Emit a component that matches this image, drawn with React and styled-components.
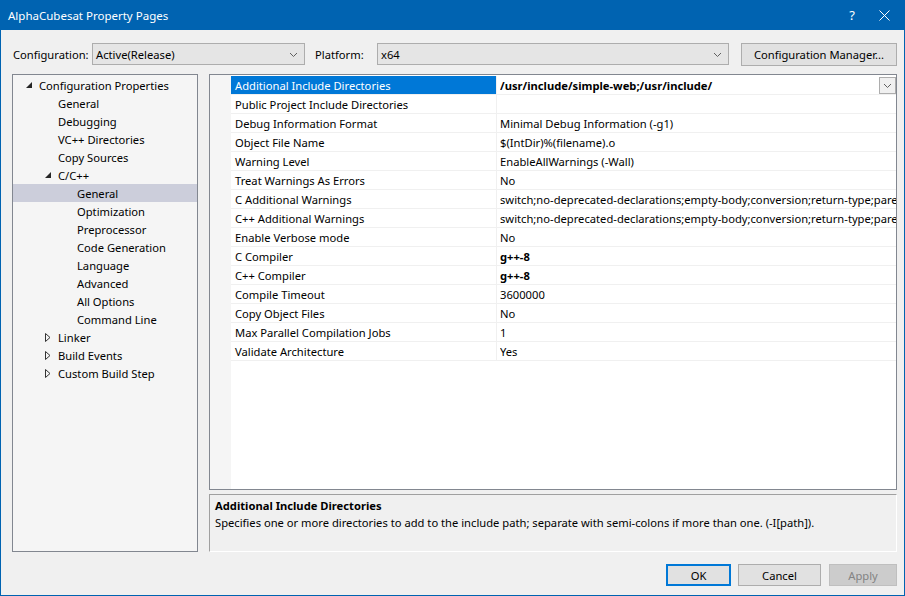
import React from "react";
import styled, { createGlobalStyle } from "styled-components";

const GlobalStyle = createGlobalStyle`
  html, body {
    margin: 0;
    padding: 0;
    background: #f0f0f0;
  }
  * {
    box-sizing: border-box;
  }
`;

const Window = styled.div`
  width: 905px;
  height: 596px;
  display: flex;
  flex-direction: column;
  background: #f0f0f0;
  border: 1px solid #0063b1;
  border-top: none;
  font-family: "Noto Sans", "Segoe UI", sans-serif;
  font-size: 11.2px;
  color: #000;
  overflow: hidden;
`;

const TitleBar = styled.div`
  height: 30px;
  flex: none;
  display: flex;
  align-items: center;
  background: #0063b1;
  color: #fff;
  padding: 0 5px 0 8px;
  margin: 0 -1px;
  font-size: 11.5px;
`;

const Title = styled.div`
  flex: 1;
`;

const TitleButton = styled.div`
  width: 32px;
  height: 30px;
  display: flex;
  align-items: center;
  justify-content: center;
  font-size: 13px;
`;

const Body = styled.div`
  flex: 1;
  display: flex;
  flex-direction: column;
  padding: 13px 7px 0 11px;
`;

const ConfigRow = styled.div`
  height: 22px;
  display: flex;
  align-items: center;
`;

const Label = styled.span`
  width: ${(p) => p.width}px;
  flex: none;
  margin-left: ${(p) => p.left || 0}px;
  white-space: nowrap;
`;

const Select = styled.div`
  height: 22px;
  width: ${(p) => p.width}px;
  flex: none;
  display: flex;
  align-items: center;
  background: #e5e5e5;
  border: 1px solid #adadad;
  padding-left: 3px;
`;

const SelectText = styled.span`
  flex: 1;
`;

const Chevron = ({ gap = 6 }) => (
  <svg width="9" height="9" viewBox="0 0 9 9" style={{ marginRight: gap }}>
    <path d="M1 3 L4.5 6.5 L8 3" fill="none" stroke="#606060" strokeWidth="1" />
  </svg>
);

const Button = styled.button`
  height: ${(p) => p.h || 22}px;
  width: ${(p) => p.width}px;
  flex: none;
  margin-left: ${(p) => p.left || 0}px;
  font-family: inherit;
  font-size: 11.2px;
  color: ${(p) => (p.disabled ? "#838383" : "#000")};
  background: ${(p) => (p.disabled ? "#cccccc" : "#e1e1e1")};
  border: ${(p) =>
    p.primary ? "2px solid #0078d7" : p.disabled ? "1px solid #bfbfbf" : "1px solid #adadad"};
  padding: 0;
`;

const Main = styled.div`
  height: 478px;
  margin-top: 9px;
  display: flex;
  gap: 11px;
`;

const Tree = styled.div`
  width: 186px;
  flex: none;
  background: #f5f5f5;
  border: 1px solid #828790;
  padding-top: 1px;
`;

const TreeRow = styled.div`
  height: 18px;
  display: flex;
  align-items: center;
  padding-left: ${(p) => 10 + p.level * 19}px;
  background: ${(p) => (p.selected ? "#cccedb" : "transparent")};
  white-space: nowrap;
`;

const Toggle = styled.span`
  width: 16px;
  height: 18px;
  display: flex;
  align-items: center;
  padding-left: 3px;
`;

const Expanded = () => (
  <svg width="6" height="6" viewBox="0 0 6 6">
    <path d="M6 0 L6 6 L0 6 Z" fill="#262626" />
  </svg>
);

const Collapsed = () => (
  <svg width="6" height="9" viewBox="0 0 6 9">
    <path d="M0.5 0.5 L5 4.5 L0.5 8.5 Z" fill="none" stroke="#333" strokeWidth="1" />
  </svg>
);

const RightCol = styled.div`
  flex: 1;
  min-width: 0;
  display: flex;
  flex-direction: column;
  gap: 4px;
`;

const Grid = styled.div`
  height: 418px;
  background: #fff;
  border: 1px solid #828790;
  display: flex;
`;

const Margin = styled.div`
  width: 21px;
  flex: none;
  background: #f5f5f5;
`;

const Rows = styled.div`
  flex: 1;
  min-width: 0;
  padding-top: 1px;
  overflow: hidden;
`;

const PropRow = styled.div`
  height: 19px;
  display: flex;
  border-bottom: 1px solid #f0f0f0;
`;

const NameCell = styled.div`
  width: 266px;
  flex: none;
  display: flex;
  align-items: center;
  padding-left: 4px;
  border-right: 1px solid #f0f0f0;
  background: ${(p) => (p.selected ? "#0078d7" : "transparent")};
  color: ${(p) => (p.selected ? "#fff" : "#000")};
  white-space: nowrap;
`;

const ValueCell = styled.div`
  flex: 1;
  min-width: 0;
  display: flex;
  align-items: center;
  padding-left: 3px;
  font-weight: ${(p) => (p.bold ? 700 : 400)};
  white-space: nowrap;
  overflow: hidden;
`;

const ValueText = styled.span`
  flex: 1;
  min-width: 0;
  overflow: hidden;
`;

const DropButton = styled.span`
  width: 17px;
  height: 17px;
  flex: none;
  display: flex;
  align-items: center;
  justify-content: center;
  background: #f0f0f0;
  border: 1px solid #adadad;
`;

const Description = styled.div`
  height: 58px;
  background: #f0f0f0;
  border: 1px solid #a0a0a0;
  border-right-color: #fff;
  border-bottom-color: #fff;
  padding: 2px 5px;
`;

const DescTitle = styled.div`
  font-weight: 700;
  line-height: 17px;
`;

const DescText = styled.div`
  line-height: 17px;
`;

const Footer = styled.div`
  flex: 1;
  display: flex;
  justify-content: flex-end;
  align-items: flex-start;
  padding-top: 12px;
`;

const tree = [
  { label: "Configuration Properties", level: 0, toggle: "open" },
  { label: "General", level: 1 },
  { label: "Debugging", level: 1 },
  { label: "VC++ Directories", level: 1 },
  { label: "Copy Sources", level: 1 },
  { label: "C/C++", level: 1, toggle: "open" },
  { label: "General", level: 2, selected: true },
  { label: "Optimization", level: 2 },
  { label: "Preprocessor", level: 2 },
  { label: "Code Generation", level: 2 },
  { label: "Language", level: 2 },
  { label: "Advanced", level: 2 },
  { label: "All Options", level: 2 },
  { label: "Command Line", level: 2 },
  { label: "Linker", level: 1, toggle: "closed" },
  { label: "Build Events", level: 1, toggle: "closed" },
  { label: "Custom Build Step", level: 1, toggle: "closed" },
];

const warnings =
  "switch;no-deprecated-declarations;empty-body;conversion;return-type;parentheses;no-format;uninitialized;unreachable-code;unused-function;unused-value;unused-variable";

const props = [
  { name: "Additional Include Directories", value: "/usr/include/simple-web;/usr/include/", bold: true, selected: true },
  { name: "Public Project Include Directories", value: "" },
  { name: "Debug Information Format", value: "Minimal Debug Information (-g1)" },
  { name: "Object File Name", value: "$(IntDir)%(filename).o" },
  { name: "Warning Level", value: "EnableAllWarnings (-Wall)" },
  { name: "Treat Warnings As Errors", value: "No" },
  { name: "C Additional Warnings", value: warnings },
  { name: "C++ Additional Warnings", value: warnings },
  { name: "Enable Verbose mode", value: "No" },
  { name: "C Compiler", value: "g++-8", bold: true },
  { name: "C++ Compiler", value: "g++-8", bold: true },
  { name: "Compile Timeout", value: "3600000" },
  { name: "Copy Object Files", value: "No" },
  { name: "Max Parallel Compilation Jobs", value: "1" },
  { name: "Validate Architecture", value: "Yes" },
];

export default function App() {
  return (
    <>
      <GlobalStyle />
      <Window>
        <TitleBar>
          <Title>AlphaCubesat Property Pages</Title>
          <TitleButton>?</TitleButton>
          <TitleButton>
            <svg width="11" height="11" viewBox="0 0 11 11">
              <path d="M0.5 0.5 L10.5 10.5 M10.5 0.5 L0.5 10.5" stroke="#fff" strokeWidth="1" />
            </svg>
          </TitleButton>
        </TitleBar>
        <Body>
          <ConfigRow>
            <Label left={1} width={79}>Configuration:</Label>
            <Select width={213}>
              <SelectText>Active(Release)</SelectText>
              <Chevron />
            </Select>
            <Label left={10} width={62}>Platform:</Label>
            <Select width={352}>
              <SelectText>x64</SelectText>
              <Chevron />
            </Select>
            <Button width={156} h={23} left={12}>Configuration Manager...</Button>
          </ConfigRow>
          <Main>
            <Tree>
              {tree.map((t, i) => (
                <TreeRow key={i} level={t.level} selected={t.selected}>
                  <Toggle>
                    {t.toggle === "open" && <Expanded />}
                    {t.toggle === "closed" && <Collapsed />}
                  </Toggle>
                  {t.label}
                </TreeRow>
              ))}
            </Tree>
            <RightCol>
              <Grid>
                <Margin />
                <Rows>
                  {props.map((p, i) => (
                    <PropRow key={i}>
                      <NameCell selected={p.selected}>{p.name}</NameCell>
                      <ValueCell bold={p.bold}>
                        <ValueText>{p.value}</ValueText>
                        {p.selected && (
                          <DropButton>
                            <Chevron gap={0} />
                          </DropButton>
                        )}
                      </ValueCell>
                    </PropRow>
                  ))}
                </Rows>
              </Grid>
              <Description>
                <DescTitle>Additional Include Directories</DescTitle>
                <DescText>
                  Specifies one or more directories to add to the include path; separate with semi-colons if more than one. (-I[path]).
                </DescText>
              </Description>
            </RightCol>
          </Main>
          <Footer>
            <Button width={65} primary>OK</Button>
            <Button width={83} left={7}>Cancel</Button>
            <Button width={68} left={8} disabled>Apply</Button>
          </Footer>
        </Body>
      </Window>
    </>
  );
}
